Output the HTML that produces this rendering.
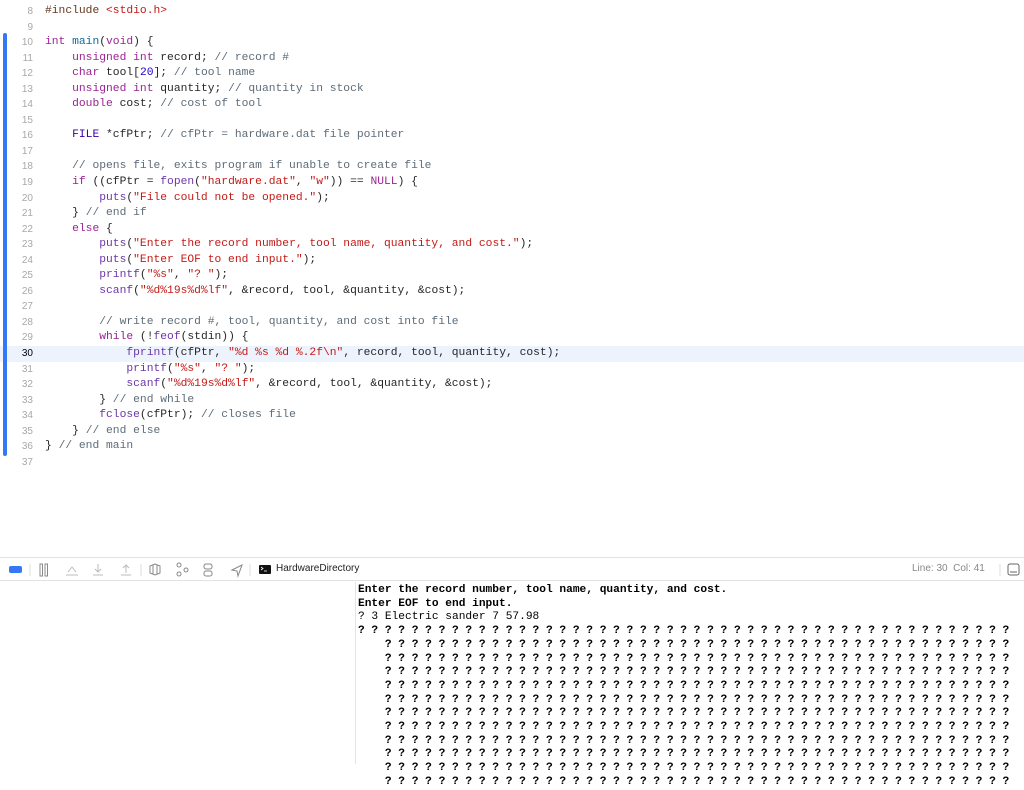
<!DOCTYPE html>
<html><head><meta charset="utf-8"><style>
*{margin:0;padding:0;box-sizing:border-box}
body{width:1024px;height:764px;overflow:hidden;background:#fff;font-family:"Liberation Mono",monospace;position:relative}
.code{position:absolute;left:0;top:4px;width:1024px}
.ln{height:15.55px;line-height:15.55px;font-size:11.3px;white-space:pre;position:relative}
.ln .n{position:absolute;left:0;width:33px;text-align:right;color:#a8a8a8;font-size:10px;font-family:"Liberation Sans",sans-serif}
.ln .t{position:absolute;left:45px;color:#262626}
.cur{background:#ecf3fd}
.cur .n{color:#000}
.k{color:#9b2393}.c{color:#5d6c79}.s{color:#c41a16}.d{color:#1c00cf}.f{color:#6c36a9}.m{color:#0f68a0}.ty{color:#3900a0}
.bar{position:absolute;left:3px;top:33px;width:4px;height:423px;background:#3478f6;border-radius:2px;z-index:5}
.tb{position:absolute;left:0;top:557px;width:1024px;height:24px;border-top:1px solid #e2e2e2;border-bottom:1px solid #e2e2e2;font-family:"Liberation Sans",sans-serif;font-size:10px;color:#222}
.con{position:absolute;left:358px;top:584px;font-size:11.2px;line-height:13.7px;white-space:pre;font-weight:bold;color:#000;width:660px;overflow:hidden}
.vl{position:absolute;left:355px;top:582px;width:1px;height:182px;background:#e4e4e4}
</style></head><body>
<div class="bar"></div>
<div class="code">
<div class="ln"><span class="n">8</span><span class="t"><span class="k" style="color:#643820">#include</span> <span class="s">&lt;stdio.h&gt;</span></span></div>
<div class="ln"><span class="n">9</span></div>
<div class="ln"><span class="n">10</span><span class="t"><span class="k">int</span> <span class="m">main</span>(<span class="k">void</span>) {</span></div>
<div class="ln"><span class="n">11</span><span class="t">    <span class="k">unsigned</span> <span class="k">int</span> record; <span class="c">// record #</span></span></div>
<div class="ln"><span class="n">12</span><span class="t">    <span class="k">char</span> tool[<span class="d">20</span>]; <span class="c">// tool name</span></span></div>
<div class="ln"><span class="n">13</span><span class="t">    <span class="k">unsigned</span> <span class="k">int</span> quantity; <span class="c">// quantity in stock</span></span></div>
<div class="ln"><span class="n">14</span><span class="t">    <span class="k">double</span> cost; <span class="c">// cost of tool</span></span></div>
<div class="ln"><span class="n">15</span></div>
<div class="ln"><span class="n">16</span><span class="t">    <span class="ty">FILE</span> *cfPtr; <span class="c">// cfPtr = hardware.dat file pointer</span></span></div>
<div class="ln"><span class="n">17</span></div>
<div class="ln"><span class="n">18</span><span class="t">    <span class="c">// opens file, exits program if unable to create file</span></span></div>
<div class="ln"><span class="n">19</span><span class="t">    <span class="k">if</span> ((cfPtr = <span class="f">fopen</span>(<span class="s">"hardware.dat"</span>, <span class="s">"w"</span>)) == <span class="k">NULL</span>) {</span></div>
<div class="ln"><span class="n">20</span><span class="t">        <span class="f">puts</span>(<span class="s">"File could not be opened."</span>);</span></div>
<div class="ln"><span class="n">21</span><span class="t">    } <span class="c">// end if</span></span></div>
<div class="ln"><span class="n">22</span><span class="t">    <span class="k">else</span> {</span></div>
<div class="ln"><span class="n">23</span><span class="t">        <span class="f">puts</span>(<span class="s">"Enter the record number, tool name, quantity, and cost."</span>);</span></div>
<div class="ln"><span class="n">24</span><span class="t">        <span class="f">puts</span>(<span class="s">"Enter EOF to end input."</span>);</span></div>
<div class="ln"><span class="n">25</span><span class="t">        <span class="f">printf</span>(<span class="s">"%s"</span>, <span class="s">"? "</span>);</span></div>
<div class="ln"><span class="n">26</span><span class="t">        <span class="f">scanf</span>(<span class="s">"%d%19s%d%lf"</span>, &amp;record, tool, &amp;quantity, &amp;cost);</span></div>
<div class="ln"><span class="n">27</span></div>
<div class="ln"><span class="n">28</span><span class="t">        <span class="c">// write record #, tool, quantity, and cost into file</span></span></div>
<div class="ln"><span class="n">29</span><span class="t">        <span class="k">while</span> (!<span class="f">feof</span>(stdin)) {</span></div>
<div class="ln cur"><span class="n">30</span><span class="t">            <span class="f">fprintf</span>(cfPtr, <span class="s">"%d %s %d %.2f\n"</span>, record, tool, quantity, cost);</span></div>
<div class="ln"><span class="n">31</span><span class="t">            <span class="f">printf</span>(<span class="s">"%s"</span>, <span class="s">"? "</span>);</span></div>
<div class="ln"><span class="n">32</span><span class="t">            <span class="f">scanf</span>(<span class="s">"%d%19s%d%lf"</span>, &amp;record, tool, &amp;quantity, &amp;cost);</span></div>
<div class="ln"><span class="n">33</span><span class="t">        } <span class="c">// end while</span></span></div>
<div class="ln"><span class="n">34</span><span class="t">        <span class="f">fclose</span>(cfPtr); <span class="c">// closes file</span></span></div>
<div class="ln"><span class="n">35</span><span class="t">    } <span class="c">// end else</span></span></div>
<div class="ln"><span class="n">36</span><span class="t">} <span class="c">// end main</span></span></div>
<div class="ln"><span class="n">37</span></div>
</div>
<div class="tb">
<svg width="1024" height="24" style="position:absolute;left:0;top:0">
<rect x="9" y="8" width="13" height="7" rx="2" fill="#3478f6"/>
<line x1="30" y1="6" x2="30" y2="18" stroke="#ddd"/>
<rect x="40" y="6" width="2.5" height="12" fill="none" stroke="#888" stroke-width="1"/><rect x="45" y="6" width="2.5" height="12" fill="none" stroke="#888" stroke-width="1"/>
<path d="M66 17h12M68 14l4-5 4 5" stroke="#bbb" fill="none"/>
<path d="M98 6v8M95 11l3 3 3-3M93 17h10" stroke="#bbb" fill="none"/>
<path d="M126 15V7M123 10l3-3 3 3M121 17h10" stroke="#bbb" fill="none"/>
<line x1="141" y1="6" x2="141" y2="18" stroke="#ddd"/>
<path d="M150 8l5-2 5 2v7l-5 2-5-2zM153 7v9M157 7v9" stroke="#888" fill="none"/>
<circle cx="179" cy="7" r="2" stroke="#888" fill="none"/><circle cx="179" cy="16" r="2" stroke="#888" fill="none"/><circle cx="186" cy="12" r="2" stroke="#888" fill="none"/>
<rect x="204" y="6" width="8" height="5" rx="2" stroke="#888" fill="none"/><rect x="204" y="13" width="8" height="5" rx="2" stroke="#888" fill="none"/>
<path d="M232 12l10-5-4 11-1-5z" stroke="#888" fill="none"/>
<line x1="250" y1="6" x2="250" y2="18" stroke="#ddd"/>
<rect x="259" y="7" width="12" height="9" rx="1" fill="#111"/><path d="M261 9l2 1.5-2 1.5M264 13h3" stroke="#fff" stroke-width=".8" fill="none"/>
<line x1="1000" y1="6" x2="1000" y2="18" stroke="#ddd"/>
<rect x="1008" y="6" width="11" height="11" rx="2" stroke="#666" fill="none"/><line x1="1010" y1="14" x2="1017" y2="14" stroke="#666"/>
</svg>
<span style="position:absolute;left:276px;top:5px">HardwareDirectory</span>
<span style="position:absolute;left:912px;top:5px;color:#888">Line: 30&nbsp; Col: 41</span>
</div>
<div class="vl"></div>
<div class="con">Enter the record number, tool name, quantity, and cost.
Enter EOF to end input.
<span style="font-weight:normal">? 3 Electric sander 7 57.98</span>
? ? ? ? ? ? ? ? ? ? ? ? ? ? ? ? ? ? ? ? ? ? ? ? ? ? ? ? ? ? ? ? ? ? ? ? ? ? ? ? ? ? ? ? ? ? ? ? ?
    ? ? ? ? ? ? ? ? ? ? ? ? ? ? ? ? ? ? ? ? ? ? ? ? ? ? ? ? ? ? ? ? ? ? ? ? ? ? ? ? ? ? ? ? ? ? ?
    ? ? ? ? ? ? ? ? ? ? ? ? ? ? ? ? ? ? ? ? ? ? ? ? ? ? ? ? ? ? ? ? ? ? ? ? ? ? ? ? ? ? ? ? ? ? ?
    ? ? ? ? ? ? ? ? ? ? ? ? ? ? ? ? ? ? ? ? ? ? ? ? ? ? ? ? ? ? ? ? ? ? ? ? ? ? ? ? ? ? ? ? ? ? ?
    ? ? ? ? ? ? ? ? ? ? ? ? ? ? ? ? ? ? ? ? ? ? ? ? ? ? ? ? ? ? ? ? ? ? ? ? ? ? ? ? ? ? ? ? ? ? ?
    ? ? ? ? ? ? ? ? ? ? ? ? ? ? ? ? ? ? ? ? ? ? ? ? ? ? ? ? ? ? ? ? ? ? ? ? ? ? ? ? ? ? ? ? ? ? ?
    ? ? ? ? ? ? ? ? ? ? ? ? ? ? ? ? ? ? ? ? ? ? ? ? ? ? ? ? ? ? ? ? ? ? ? ? ? ? ? ? ? ? ? ? ? ? ?
    ? ? ? ? ? ? ? ? ? ? ? ? ? ? ? ? ? ? ? ? ? ? ? ? ? ? ? ? ? ? ? ? ? ? ? ? ? ? ? ? ? ? ? ? ? ? ?
    ? ? ? ? ? ? ? ? ? ? ? ? ? ? ? ? ? ? ? ? ? ? ? ? ? ? ? ? ? ? ? ? ? ? ? ? ? ? ? ? ? ? ? ? ? ? ?
    ? ? ? ? ? ? ? ? ? ? ? ? ? ? ? ? ? ? ? ? ? ? ? ? ? ? ? ? ? ? ? ? ? ? ? ? ? ? ? ? ? ? ? ? ? ? ?
    ? ? ? ? ? ? ? ? ? ? ? ? ? ? ? ? ? ? ? ? ? ? ? ? ? ? ? ? ? ? ? ? ? ? ? ? ? ? ? ? ? ? ? ? ? ? ?
    ? ? ? ? ? ? ? ? ? ? ? ? ? ? ? ? ? ? ? ? ? ? ? ? ? ? ? ? ? ? ? ? ? ? ? ? ? ? ? ? ? ? ? ? ? ? ?</div>
</body></html>
